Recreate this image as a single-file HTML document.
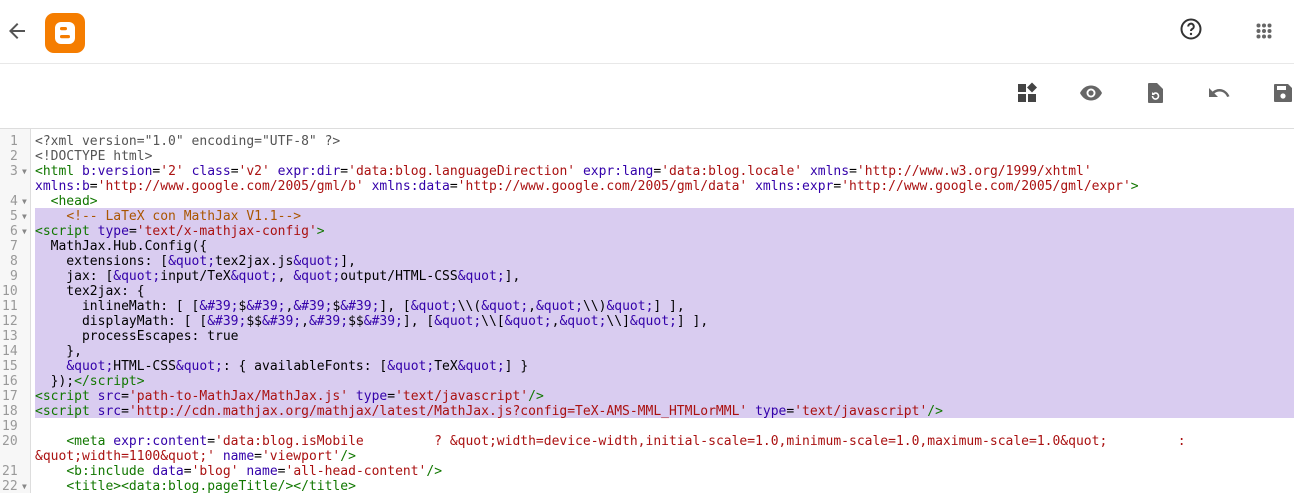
<!DOCTYPE html>
<html><head><style>
body{margin:0;width:1294px;height:493px;overflow:hidden;background:#fff;font-family:"Liberation Sans",sans-serif;position:relative}
.hdr{position:absolute;left:0;top:0;width:1294px;height:63px;border-bottom:1px solid #e8e8e8}
.tb{position:absolute;left:0;top:64px;width:1294px;height:64px;border-bottom:1px solid #ddd}
svg{position:absolute}
.code{position:absolute;left:0;top:129px;width:1294px;height:364px;font-family:"DejaVu Sans Mono",monospace;font-size:13px;line-height:15px}
.gut{position:absolute;left:0;top:0;width:30px;height:364px;background:#f7f7f7;border-right:1px solid #ddd}
.ln{position:absolute;left:0;width:30px;color:#999;font-size:13px;transform:translateY(1px)}
.ln span{position:absolute;left:10px}
.ln i{position:absolute;left:22px;font-style:normal;font-size:8px;color:#888}
.l{position:absolute;left:35px;white-space:pre;color:#000;transform:translateY(1px)}
.hl{position:absolute;left:35px;top:79px;width:1259px;height:210px;background:#d9ccf0}
.t{color:#170}.a{color:#30a}.s{color:#a11}.c{color:#a50}.g{color:#555}
</style></head><body>
<div class="hdr"></div>
<svg style="left:5px;top:19px" width="24" height="24" viewBox="0 0 24 24"><path d="M20 11H7.8l5.6-5.6L12 4l-8 8 8 8 1.4-1.4L7.8 13H20z" fill="#555"/></svg>
<svg style="left:45px;top:13px" width="40" height="40" viewBox="0 0 40 40"><rect width="40" height="40" rx="9" fill="#f57d00"/><rect x="10" y="9" width="20" height="22" rx="6" fill="#fff"/><rect x="15" y="14" width="7" height="3.2" rx="1.6" fill="#f57d00"/><rect x="15" y="22" width="10" height="3.2" rx="1.6" fill="#f57d00"/></svg>
<svg style="left:1179px;top:17px" width="24" height="24" viewBox="0 0 24 24"><circle cx="12" cy="12" r="9.5" fill="none" stroke="#333" stroke-width="2"/><path d="M9.2 9.5a2.8 2.8 0 1 1 4 2.5c-.9.5-1.2 1-1.2 2" fill="none" stroke="#333" stroke-width="2"/><circle cx="12" cy="17" r="1.2" fill="#333"/></svg>
<svg style="left:1252px;top:19px" width="24" height="24" viewBox="0 0 24 24" fill="#666"><circle cx="6.5" cy="6.5" r="2"/><circle cx="12" cy="6.5" r="2"/><circle cx="17.5" cy="6.5" r="2"/><circle cx="6.5" cy="12" r="2"/><circle cx="12" cy="12" r="2"/><circle cx="17.5" cy="12" r="2"/><circle cx="6.5" cy="17.5" r="2"/><circle cx="12" cy="17.5" r="2"/><circle cx="17.5" cy="17.5" r="2"/></svg>
<div class="tb"></div>
<svg style="left:1015px;top:81px" width="24" height="24" viewBox="0 0 24 24" fill="#444"><rect x="3" y="3" width="8" height="8"/><rect x="3" y="13" width="8" height="8"/><rect x="13" y="13" width="8" height="8"/><path d="M17 1.5l5 5-5 5-5-5z"/></svg>
<svg style="left:1079px;top:81px" width="24" height="24" viewBox="0 0 24 24"><path d="M1 12c2.5-5 6.5-7.5 11-7.5S20.5 7 23 12c-2.5 5-6.5 7.5-11 7.5S3.5 17 1 12z" fill="#666"/><circle cx="12" cy="12" r="4.5" fill="#fff"/><circle cx="12" cy="12" r="2.6" fill="#666"/></svg>
<svg style="left:1143px;top:81px" width="24" height="24" viewBox="0 0 24 24"><path d="M6 2h8l6 6v13a1 1 0 0 1-1 1H6a1 1 0 0 1-1-1V3a1 1 0 0 1 1-1z" fill="#666"/><path d="M9.5 15a3 3 0 1 0 1-2.2" fill="none" stroke="#fff" stroke-width="1.6"/><path d="M9 11v3h3z" fill="#fff"/></svg>
<svg style="left:1207px;top:81px" width="24" height="24" viewBox="0 0 24 24"><path d="M12.5 8c-2.6 0-5 1-6.9 2.6L2 7v9h9l-3.6-3.6c1.4-1.2 3.2-1.9 5.1-1.9 3.5 0 6.5 2.3 7.6 5.5l2.4-.8C21 11.5 17.1 8 12.5 8z" fill="#666"/></svg>
<svg style="left:1271px;top:81px" width="24" height="24" viewBox="0 0 24 24"><path d="M4 3h13l4 4v13a1 1 0 0 1-1 1H4a1 1 0 0 1-1-1V4a1 1 0 0 1 1-1z" fill="#666"/><rect x="6" y="5" width="9" height="4" fill="#fff"/><circle cx="12" cy="15" r="2.6" fill="#fff"/></svg>
<div class="code">
<div class="gut"></div>
<div class="hl"></div>
<div class="ln" style="top:4px"><span>1</span></div>
<div class="ln" style="top:19px"><span>2</span></div>
<div class="ln" style="top:34px"><span>3</span><i>▼</i></div>
<div class="ln" style="top:64px"><span>4</span><i>▼</i></div>
<div class="ln" style="top:79px"><span>5</span><i>▼</i></div>
<div class="ln" style="top:94px"><span>6</span><i>▼</i></div>
<div class="ln" style="top:109px"><span>7</span></div>
<div class="ln" style="top:124px"><span>8</span></div>
<div class="ln" style="top:139px"><span>9</span></div>
<div class="ln" style="top:154px"><span style="left:2px">10</span></div>
<div class="ln" style="top:169px"><span style="left:2px">11</span></div>
<div class="ln" style="top:184px"><span style="left:2px">12</span></div>
<div class="ln" style="top:199px"><span style="left:2px">13</span></div>
<div class="ln" style="top:214px"><span style="left:2px">14</span></div>
<div class="ln" style="top:229px"><span style="left:2px">15</span></div>
<div class="ln" style="top:244px"><span style="left:2px">16</span></div>
<div class="ln" style="top:259px"><span style="left:2px">17</span></div>
<div class="ln" style="top:274px"><span style="left:2px">18</span></div>
<div class="ln" style="top:289px"><span style="left:2px">19</span></div>
<div class="ln" style="top:304px"><span style="left:2px">20</span></div>
<div class="ln" style="top:334px"><span style="left:2px">21</span></div>
<div class="ln" style="top:349px"><span style="left:2px">22</span><i>▼</i></div>
<div class="l g" style="top:4px">&lt;?xml version="1.0" encoding="UTF-8" ?&gt;</div>
<div class="l g" style="top:19px">&lt;!DOCTYPE html&gt;</div>
<div class="l" style="top:34px"><span class="t">&lt;html</span> <span class="a">b:version</span>=<span class="s">'2'</span> <span class="a">class</span>=<span class="s">'v2'</span> <span class="a">expr:dir</span>=<span class="s">'data:blog.languageDirection'</span> <span class="a">expr:lang</span>=<span class="s">'data:blog.locale'</span> <span class="a">xmlns</span>=<span class="s">'http://www.w3.org/1999/xhtml'</span></div>
<div class="l" style="top:49px"><span class="a">xmlns:b</span>=<span class="s">'http://www.google.com/2005/gml/b'</span> <span class="a">xmlns:data</span>=<span class="s">'http://www.google.com/2005/gml/data'</span> <span class="a">xmlns:expr</span>=<span class="s">'http://www.google.com/2005/gml/expr'</span><span class="t">&gt;</span></div>
<div class="l" style="top:64px">  <span class="t">&lt;head&gt;</span></div>
<div class="l" style="top:79px">    <span class="c">&lt;!-- LaTeX con MathJax V1.1--&gt;</span></div>
<div class="l" style="top:94px"><span class="t">&lt;script</span> <span class="a">type</span>=<span class="s">'text/x-mathjax-config'</span><span class="t">&gt;</span></div>
<div class="l" style="top:109px">  MathJax.Hub.Config({</div>
<div class="l" style="top:124px">    extensions: [<span class="a">&amp;quot;</span>tex2jax.js<span class="a">&amp;quot;</span>],</div>
<div class="l" style="top:139px">    jax: [<span class="a">&amp;quot;</span>input/TeX<span class="a">&amp;quot;</span>, <span class="a">&amp;quot;</span>output/HTML-CSS<span class="a">&amp;quot;</span>],</div>
<div class="l" style="top:154px">    tex2jax: {</div>
<div class="l" style="top:169px">      inlineMath: [ [<span class="a">&amp;#39;</span>$<span class="a">&amp;#39;</span>,<span class="a">&amp;#39;</span>$<span class="a">&amp;#39;</span>], [<span class="a">&amp;quot;</span>\\(<span class="a">&amp;quot;</span>,<span class="a">&amp;quot;</span>\\)<span class="a">&amp;quot;</span>] ],</div>
<div class="l" style="top:184px">      displayMath: [ [<span class="a">&amp;#39;</span>$$<span class="a">&amp;#39;</span>,<span class="a">&amp;#39;</span>$$<span class="a">&amp;#39;</span>], [<span class="a">&amp;quot;</span>\\[<span class="a">&amp;quot;</span>,<span class="a">&amp;quot;</span>\\]<span class="a">&amp;quot;</span>] ],</div>
<div class="l" style="top:199px">      processEscapes: true</div>
<div class="l" style="top:214px">    },</div>
<div class="l" style="top:229px">    <span class="a">&amp;quot;</span>HTML-CSS<span class="a">&amp;quot;</span>: { availableFonts: [<span class="a">&amp;quot;</span>TeX<span class="a">&amp;quot;</span>] }</div>
<div class="l" style="top:244px">  });<span class="t">&lt;/script&gt;</span></div>
<div class="l" style="top:259px"><span class="t">&lt;script</span> <span class="a">src</span>=<span class="s">'path-to-MathJax/MathJax.js'</span> <span class="a">type</span>=<span class="s">'text/javascript'</span><span class="t">/&gt;</span></div>
<div class="l" style="top:274px"><span class="t">&lt;script</span> <span class="a">src</span>=<span class="s">'http://cdn.mathjax.org/mathjax/latest/MathJax.js?config=TeX-AMS-MML_HTMLorMML'</span> <span class="a">type</span>=<span class="s">'text/javascript'</span><span class="t">/&gt;</span></div>
<div class="l" style="top:304px">    <span class="t">&lt;meta</span> <span class="a">expr:content</span>=<span class="s">'data:blog.isMobile         ? &amp;quot;width=device-width,initial-scale=1.0,minimum-scale=1.0,maximum-scale=1.0&amp;quot;         :</span></div>
<div class="l" style="top:319px"><span class="s">&amp;quot;width=1100&amp;quot;'</span> <span class="a">name</span>=<span class="s">'viewport'</span><span class="t">/&gt;</span></div>
<div class="l" style="top:334px">    <span class="t">&lt;b:include</span> <span class="a">data</span>=<span class="s">'blog'</span> <span class="a">name</span>=<span class="s">'all-head-content'</span><span class="t">/&gt;</span></div>
<div class="l" style="top:349px">    <span class="t">&lt;title&gt;&lt;data:blog.pageTitle/&gt;&lt;/title&gt;</span></div>
</div>
</body></html>
